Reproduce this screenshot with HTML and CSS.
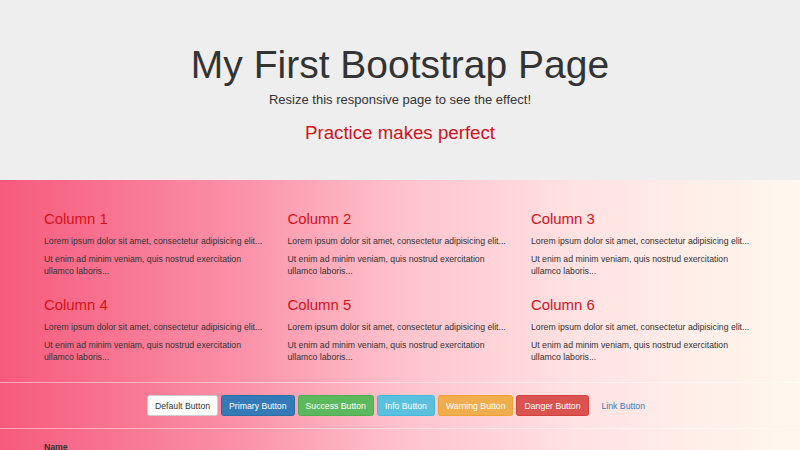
FILE: index.html
```html
<!DOCTYPE html>
<html lang="en">
<head>
<meta charset="utf-8">
<title>My First Bootstrap Page</title>
<link rel="stylesheet" href="styles.css">
</head>
<body>
<header class="jumbotron">
  <h1 class="title">My First Bootstrap Page</h1>
  <p class="lead">Resize this responsive page to see the effect!</p>
  <h2 class="motto">Practice makes perfect</h2>
</header>
<main class="content">
  <div class="grid">
    <div class="col">
      <h3 class="col-title">Column 1</h3>
      <p>Lorem ipsum dolor sit amet, consectetur adipisicing elit...</p>
      <p>Ut enim ad minim veniam, quis nostrud exercitation ullamco laboris...</p>
    </div>
    <div class="col">
      <h3 class="col-title">Column 2</h3>
      <p>Lorem ipsum dolor sit amet, consectetur adipisicing elit...</p>
      <p>Ut enim ad minim veniam, quis nostrud exercitation ullamco laboris...</p>
    </div>
    <div class="col">
      <h3 class="col-title">Column 3</h3>
      <p>Lorem ipsum dolor sit amet, consectetur adipisicing elit...</p>
      <p>Ut enim ad minim veniam, quis nostrud exercitation ullamco laboris...</p>
    </div>
    <div class="col">
      <h3 class="col-title">Column 4</h3>
      <p>Lorem ipsum dolor sit amet, consectetur adipisicing elit...</p>
      <p>Ut enim ad minim veniam, quis nostrud exercitation ullamco laboris...</p>
    </div>
    <div class="col">
      <h3 class="col-title">Column 5</h3>
      <p>Lorem ipsum dolor sit amet, consectetur adipisicing elit...</p>
      <p>Ut enim ad minim veniam, quis nostrud exercitation ullamco laboris...</p>
    </div>
    <div class="col">
      <h3 class="col-title">Column 6</h3>
      <p>Lorem ipsum dolor sit amet, consectetur adipisicing elit...</p>
      <p>Ut enim ad minim veniam, quis nostrud exercitation ullamco laboris...</p>
    </div>
  </div>
  <hr class="rule rule-top">
  <div class="buttons">
    <button class="btn btn-default">Default Button</button>
    <button class="btn btn-primary">Primary Button</button>
    <button class="btn btn-success">Success Button</button>
    <button class="btn btn-info">Info Button</button>
    <button class="btn btn-warning">Warning Button</button>
    <button class="btn btn-danger">Danger Button</button>
    <button class="btn btn-link">Link Button</button>
  </div>
  <hr class="rule">
  <form class="form">
    <label class="label">Name</label>
  </form>
</main>
</body>
</html>
```

FILE: styles.css
```css
html, body {
  margin: 0;
  padding: 0;
}
body {
  font-family: "Liberation Sans", Arial, sans-serif;
  color: #333;
  background: #fff;
  overflow: hidden;
  height: 450px;
}
.jumbotron {
  background: #eeeeee;
  height: 180px;
  box-sizing: border-box;
  padding-top: 43px;
  text-align: center;
}
.title {
  margin: 0;
  font-size: 39px;
  line-height: 43px;
  font-weight: 400;
  color: #333;
}
.lead {
  margin: 5px 0 0;
  font-size: 13px;
  line-height: 18.6px;
  color: #333;
}
.motto {
  margin: 13.5px 0 0;
  font-size: 18.7px;
  line-height: 20.5px;
  font-weight: 400;
  color: #d4121b;
}
.content {
  background: linear-gradient(to right, #f65a7c 0%, #fa91a8 30%, #ffc2cc 50%, #ffe2e2 72%, #fff8ee 100%);
  padding-top: 16.5px;
  height: 270px;
  box-sizing: border-box;
}
.grid {
  display: grid;
  grid-template-columns: repeat(3, 224px);
  column-gap: 19.5px;
  padding-left: 44px;
}
.col-title {
  margin: 14.5px 0 8px;
  font-size: 14.9px;
  line-height: 16px;
  font-weight: 400;
  color: #d4121b;
}
.col p {
  margin: 0 0 5px;
  font-size: 8.7px;
  line-height: 12.5px;
  color: #333;
}
.rule {
  margin: 12px 0 0;
  border: 0;
  border-top: 1px solid rgba(255, 255, 255, 0.45);
  height: 0;
}
.rule-top {
  margin-top: 13.5px;
}
.buttons {
  display: flex;
  justify-content: center;
  gap: 3px;
  margin-top: 12px;
}
.btn {
  font-family: "Liberation Sans", Arial, sans-serif;
  font-size: 8.7px;
  line-height: 12.5px;
  padding: 3.5px 7px;
  border: 0.6px solid transparent;
  border-radius: 2.5px;
  color: #fff;
  cursor: pointer;
  height: 21px;
  box-sizing: border-box;
}
.btn-default {
  background: #fff;
  border-color: #ccc;
  color: #333;
}
.btn-primary {
  background: #337ab7;
  border-color: #2e6da4;
}
.btn-success {
  background: #5cb85c;
  border-color: #4cae4c;
}
.btn-info {
  background: #5bc0de;
  border-color: #46b8da;
}
.btn-warning {
  background: #f0ad4e;
  border-color: #eea236;
}
.btn-danger {
  background: #d9534f;
  border-color: #d43f3a;
}
.btn-link {
  background: transparent;
  color: #337ab7;
  padding-left: 9px;
}
.form {
  padding: 12px 0 0 44px;
}
.label {
  display: block;
  font-size: 8.7px;
  line-height: 12.5px;
  font-weight: 700;
  color: #333;
}
```
